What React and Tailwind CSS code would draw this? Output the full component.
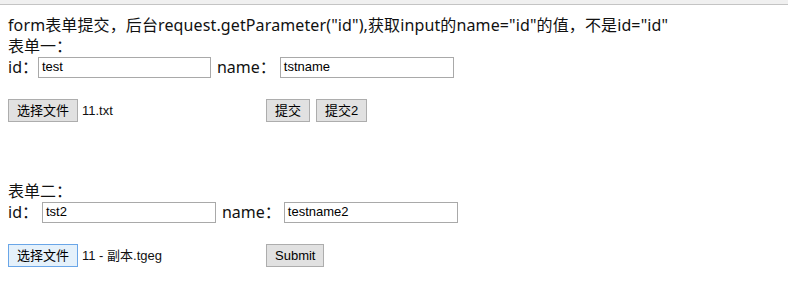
const yahei = { fontFamily: '"Noto Sans", "Noto Sans CJK SC", sans-serif' };

function Field({ value, width }) {
  return (
    <div
      className={`h-[21px] ${width} border border-[#a9a9a9] bg-white px-[3px] flex items-center text-[13px] text-black font-['Liberation_Sans','Noto_Sans_CJK_SC',sans-serif]`}
    >
      {value}
    </div>
  );
}

function Btn({ children, focused, className = "" }) {
  return (
    <div
      className={`h-[23px] px-[8px] flex items-center text-[13px] text-black border font-['Liberation_Sans','Noto_Sans_CJK_SC',sans-serif] ${
        focused ? "border-[#6aa6e8] bg-[#e5f1fb]" : "border-[#adadad] bg-[#e1e1e1]"
      } ${className}`}
    >
      {children}
    </div>
  );
}

function FormBlock({ title, id, name, idW, nameW, idGap, nameGap, file, buttons, focused }) {
  return (
    <div>
      <div className="h-[20px] leading-[20px] text-[16px]">{title}</div>
      <div className="flex items-center h-[22px] text-[16px]">
        <span className={idGap}>id：</span>
        <Field value={id} width={idW} />
        <span className={`ml-[6px] ${nameGap}`}>name：</span>
        <Field value={name} width={nameW} />
      </div>
      <div className="flex items-center mt-[21px]">
        <Btn focused={focused}>选择文件</Btn>
        <span className="ml-[4px] w-[184px] shrink-0 text-[13px] font-['Liberation_Sans','Noto_Sans_CJK_SC',sans-serif]">{file}</span>
        <div className="flex gap-[6px]">{buttons}</div>
      </div>
    </div>
  );
}

export default function App() {
  return (
    <div className="w-[788px] h-[304px] bg-white text-[#111] overflow-hidden" style={yahei}>
      <div className="h-[5px] bg-[#f0f0f0] border-b border-[#c4c4c4]" />
      <div className="pl-[8px] pt-[9px]">
        <div className="h-[22px] leading-[22px] text-[16px] tracking-[0.12px]">
          form表单提交，后台request.getParameter("id"),获取input的name="id"的值，不是id="id"
        </div>
        <FormBlock
          title="表单一："
          id="test"
          name="tstname"
          idW="w-[173px]"
          nameW="w-[174px]"
          idGap=""
          nameGap="mr-[4px]"
          file="11.txt"
          buttons={[<Btn key="a">提交</Btn>, <Btn key="b">提交2</Btn>]}
        />
        <div className="h-[59px]" />
        <FormBlock
          title="表单二："
          id="tst2"
          name="testname2"
          idW="w-[174px]"
          nameW="w-[174px]"
          idGap="mr-[4px]"
          nameGap="mr-[3px]"
          file="11 - 副本.tgeg"
          buttons={[<Btn key="a">Submit</Btn>]}
          focused
        />
      </div>
    </div>
  );
}
